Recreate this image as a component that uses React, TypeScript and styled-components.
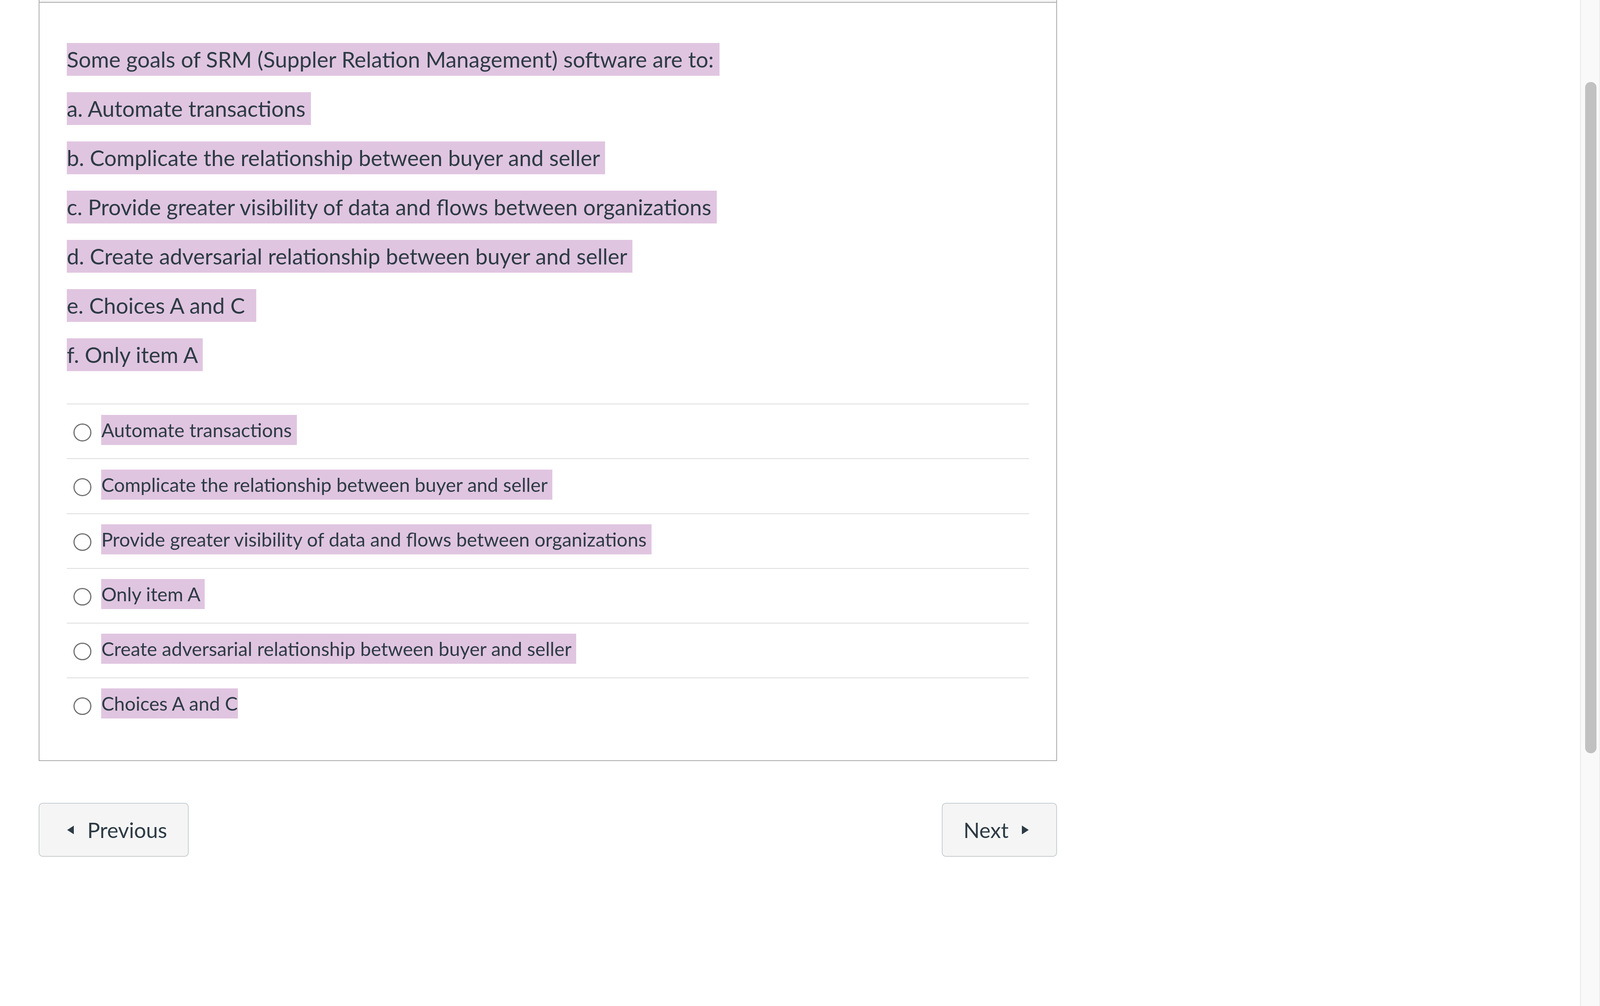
import React from "react";
import styled, { createGlobalStyle } from "styled-components";

/* The reference is measured in screenshot pixels; the page is laid out
   in CSS pixels, where one CSS pixel is 1.1421 screenshot pixels. */
const u = (v: number) => `${(v / 1.1421).toFixed(2)}px`;

const GlobalStyle = createGlobalStyle`
  html, body {
    margin: 0;
    padding: 0;
    background: #ffffff;
  }
  body {
    font-family: Lato, "Noto Sans", "Liberation Sans", sans-serif;
    color: #2d3b45;
  }
`;

const Page = styled.div`
  display: flex;
  flex-direction: column;
  padding: 0 0 0 ${u(113)};
`;

const Card = styled.section`
  width: ${u(2978)};
  box-sizing: border-box;
  border: ${u(3)} solid #a9a9a9;
  border-top: none;
  background: #ffffff;
`;

const CardHeader = styled.div`
  height: ${u(6)};
  background: #f5f5f5;
  border-bottom: ${u(3)} solid #a9a9a9;
`;

const CardBody = styled.div`
  padding: ${u(117)} ${u(80)} ${u(83)} ${u(80)};
`;

const QuestionText = styled.div`
  font-size: ${u(64)};
  line-height: ${u(96)};
`;

const Para = styled.p`
  margin: 0 0 ${u(48)} 0;
  &:last-child {
    margin-bottom: 0;
  }
`;

const Hl = styled.span`
  display: inline-block;
  background: #e0c5e0;
`;

const Answers = styled.div`
  margin-top: ${u(95)};
  display: flex;
  flex-direction: column;
`;

const AnswerRow = styled.label`
  display: flex;
  align-items: flex-start;
  gap: ${u(29)};
  border-top: ${u(3)} solid #dcdcdc;
  padding: ${u(30)} 0 ${u(39.7)} ${u(20)};
`;

const Radio = styled.span`
  flex-shrink: 0;
  width: ${u(52)};
  height: ${u(52)};
  box-sizing: border-box;
  border: ${u(4)} solid #717171;
  border-radius: 50%;
  background: #ffffff;
  margin-top: ${u(26)};
`;

const AnswerLabel = styled.span`
  font-size: ${u(56)};
  line-height: ${u(88)};
`;

const NavRow = styled.div`
  width: ${u(2978)};
  margin-top: ${u(122)};
  display: flex;
  justify-content: space-between;
`;

const NavButton = styled.button<{ $dir: "prev" | "next" }>`
  display: flex;
  align-items: center;
  flex-direction: ${(p) => (p.$dir === "prev" ? "row" : "row-reverse")};
  gap: ${u(39)};
  height: ${u(157)};
  box-sizing: border-box;
  padding: 0 ${u(61)};
  background: #f5f5f5;
  border: ${u(3)} solid #c7cdd1;
  border-radius: ${u(12)};
  font-family: Lato, "Noto Sans", "Liberation Sans", sans-serif;
  font-size: ${u(62)};
  color: #2d3b45;
  cursor: pointer;
`;

const IconBox = styled.span<{ $dir: "prev" | "next" }>`
  width: ${u(40)};
  display: flex;
  justify-content: ${(p) => (p.$dir === "prev" ? "flex-end" : "flex-start")};
  align-items: center;
`;

const ScrollTrack = styled.div`
  position: fixed;
  top: 0;
  right: 0;
  bottom: 0;
  width: ${u(58)};
  box-sizing: border-box;
  background: #f9f9f9;
  border-left: ${u(3)} solid #e6e6e6;
  border-right: ${u(3)} solid #ececec;
`;

const ScrollThumb = styled.div`
  position: absolute;
  top: ${u(240)};
  left: ${u(12)};
  width: ${u(33)};
  height: ${u(1962)};
  background: #c1c1c1;
  border-radius: ${u(16)};
`;

const TriangleSvg = styled.svg`
  width: ${u(20)};
  height: ${u(26)};
  display: block;
`;

const Triangle = ({ dir }: { dir: "prev" | "next" }) => (
  <TriangleSvg viewBox="0 0 20 26" aria-hidden="true">
    {dir === "prev" ? (
      <polygon points="20,0 20,26 0,13" fill="#2d3b45" />
    ) : (
      <polygon points="0,0 0,26 20,13" fill="#2d3b45" />
    )}
  </TriangleSvg>
);

const questionLines = [
  "Some goals of SRM (Suppler Relation Management) software are to:\u00a0",
  "a. Automate transactions\u00a0",
  "b. Complicate the relationship between buyer and seller\u00a0",
  "c. Provide greater visibility of data and flows between organizations\u00a0",
  "d. Create adversarial relationship between buyer and seller\u00a0",
  "e. Choices A and C\u00a0\u00a0",
  "f. Only item A\u00a0",
];

const answers = [
  "Automate transactions\u00a0",
  "Complicate the relationship between buyer and seller\u00a0",
  "Provide greater visibility of data and flows between organizations\u00a0",
  "Only item A\u00a0",
  "Create adversarial relationship between buyer and seller\u00a0",
  "Choices A and C",
];

export default function App() {
  return (
    <>
      <GlobalStyle />
      <Page>
        <Card>
          <CardHeader />
          <CardBody>
            <QuestionText>
              {questionLines.map((l, i) => (
                <Para key={i}>
                  <Hl>{l}</Hl>
                </Para>
              ))}
            </QuestionText>
            <Answers>
              {answers.map((a, i) => (
                <AnswerRow key={i}>
                  <Radio />
                  <AnswerLabel>
                    <Hl>{a}</Hl>
                  </AnswerLabel>
                </AnswerRow>
              ))}
            </Answers>
          </CardBody>
        </Card>
        <NavRow>
          <NavButton $dir="prev">
            <IconBox $dir="prev">
              <Triangle dir="prev" />
            </IconBox>
            Previous
          </NavButton>
          <NavButton $dir="next">
            <IconBox $dir="next">
              <Triangle dir="next" />
            </IconBox>
            Next
          </NavButton>
        </NavRow>
      </Page>
      <ScrollTrack>
        <ScrollThumb />
      </ScrollTrack>
    </>
  );
}
